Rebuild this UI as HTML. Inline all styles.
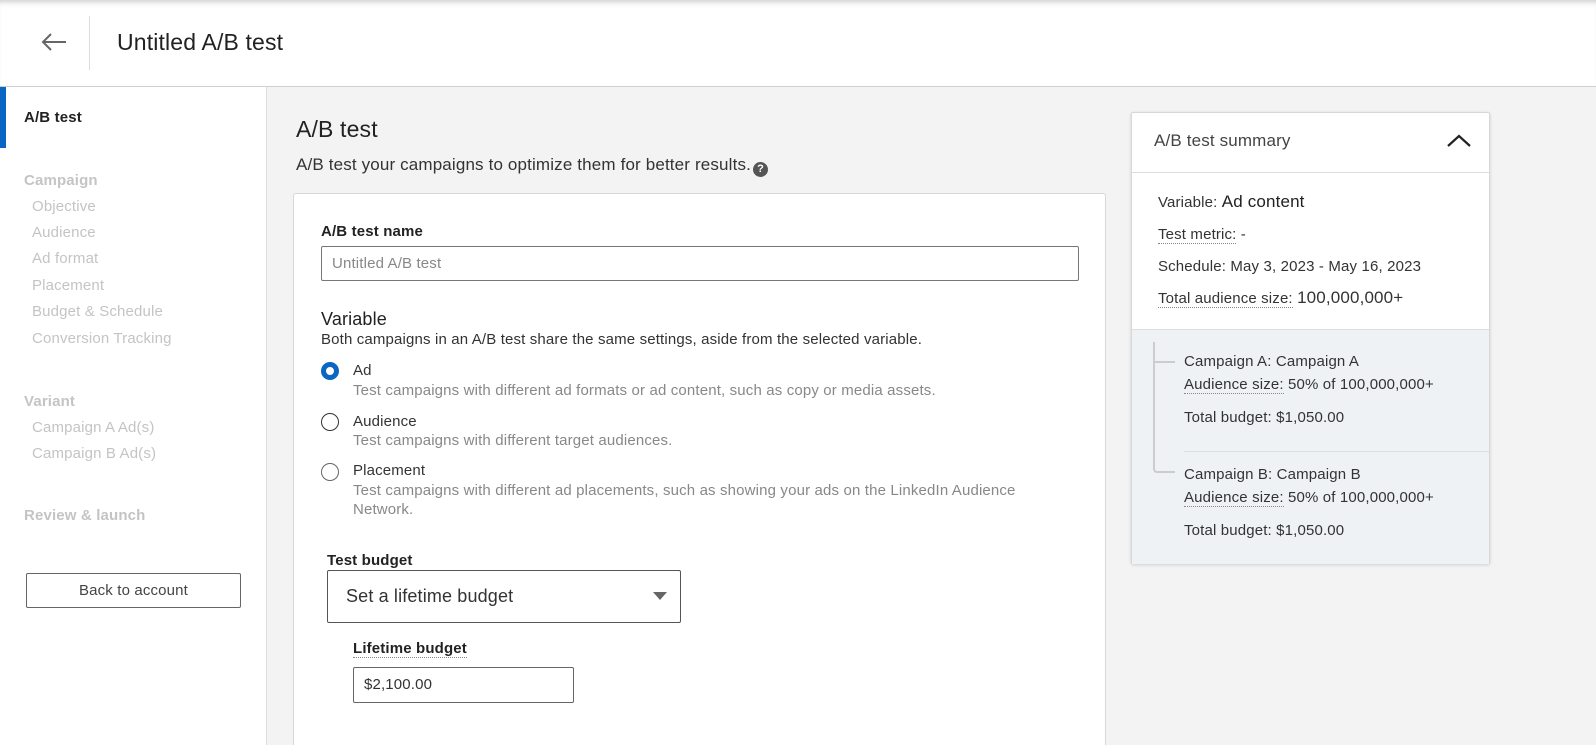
<!DOCTYPE html>
<html style="width:1596px;height:745px;overflow:hidden"><head><style>
*{box-sizing:border-box;margin:0;padding:0}
body{width:1596px;height:745px;overflow:hidden;font-family:"Liberation Sans",sans-serif;background:#f3f3f3;color:#222;position:relative;letter-spacing:.15px}
.abs{position:absolute;white-space:nowrap}
#hdr{position:absolute;left:0;top:0;width:1596px;height:87px;background:#fff;border-bottom:1px solid #d0d0d0;box-shadow:inset 0 6px 6px -4px #ccc}
#side{position:absolute;left:0;top:87px;width:267px;height:658px;background:#fff;border-right:1px solid #ddd}
.nav{position:absolute;left:32px;font-size:15px;color:#c4c4c4}
.navh{position:absolute;left:24px;font-size:15px;font-weight:bold;color:#c4c4c4}
#card{position:absolute;left:293px;top:193px;width:813px;height:552px;background:#fff;border:1px solid #d8d8d8;border-bottom:none;border-radius:3px 3px 0 0}
#sum{position:absolute;left:1131px;top:112px;width:359px;height:452px;background:#fff;border:1px solid #d8d8d8;border-radius:2px;box-shadow:0 1px 3px rgba(0,0,0,.15)}
.radio{position:absolute;width:18px;height:18px;border-radius:50%;border:1.5px solid #333}
.desc{color:#888;font-size:15px}
.dot{border-bottom:1px dotted #888}
</style></head><body>
<div id="hdr">
 <svg class="abs" style="left:40px;top:32px" width="28" height="20" viewBox="0 0 28 20"><path d="M26 10H3M11 2L3 10l8 8" fill="none" stroke="#666" stroke-width="2"/></svg>
 <div class="abs" style="left:89px;top:16px;width:1px;height:54px;background:#ddd"></div>
 <div class="abs" style="left:117px;top:29px;font-size:23px;color:#222">Untitled A/B test</div>
</div>
<div id="side">
 <div class="abs" style="left:0;top:0;width:6px;height:61px;background:#0a66c2"></div>
 <div class="abs" style="left:24px;top:22px;font-size:15px;font-weight:bold;color:#222">A/B test</div>
 <div class="navh" style="top:85px">Campaign</div>
 <div class="nav" style="top:111px">Objective</div>
 <div class="nav" style="top:137px">Audience</div>
 <div class="nav" style="top:163px">Ad format</div>
 <div class="nav" style="top:190px">Placement</div>
 <div class="nav" style="top:216px">Budget &amp; Schedule</div>
 <div class="nav" style="top:243px">Conversion Tracking</div>
 <div class="navh" style="top:306px">Variant</div>
 <div class="nav" style="top:332px">Campaign A Ad(s)</div>
 <div class="nav" style="top:358px">Campaign B Ad(s)</div>
 <div class="navh" style="top:420px">Review &amp; launch</div>
 <div class="abs" style="left:26px;top:486px;width:215px;height:35px;border:1px solid #666;border-radius:2px;text-align:center;line-height:33px;font-size:15px;color:#444">Back to account</div>
</div>
<div class="abs" style="left:296px;top:116px;font-size:23px;color:#222">A/B test</div>
<div class="abs" style="left:296px;top:155px;font-size:17px;color:#333">A/B test your campaigns to optimize them for better results.<span style="display:inline-block;width:15px;height:15px;border-radius:50%;background:#555;color:#fff;font-size:11px;font-weight:bold;text-align:center;line-height:15px;vertical-align:-2px;margin-left:2px;letter-spacing:0">?</span></div>
<div id="card">
 <div class="abs" style="left:27px;top:29px;font-size:15px;font-weight:bold;color:#222">A/B test name</div>
 <div class="abs" style="left:27px;top:52px;width:758px;height:35px;border:1px solid #777;border-radius:2px;padding-left:10px;line-height:33px;font-size:15px;color:#888">Untitled A/B test</div>
 <div class="abs" style="left:27px;top:115px;font-size:18px;color:#222">Variable</div>
 <div class="abs" style="left:27px;top:137px;font-size:15px;color:#333">Both campaigns in an A/B test share the same settings, aside from the selected variable.</div>
 <div class="radio" style="left:27px;top:168px;border:5px solid #0a66c2"></div>
 <div class="abs" style="left:59px;top:168px;font-size:15px;color:#333">Ad</div>
 <div class="abs desc" style="left:59px;top:188px">Test campaigns with different ad formats or ad content, such as copy or media assets.</div>
 <div class="radio" style="left:27px;top:219px"></div>
 <div class="abs" style="left:59px;top:219px;font-size:15px;color:#333">Audience</div>
 <div class="abs desc" style="left:59px;top:238px">Test campaigns with different target audiences.</div>
 <div class="radio" style="left:27px;top:269px;border-color:#666"></div>
 <div class="abs" style="left:59px;top:268px;font-size:15px;color:#333">Placement</div>
 <div class="abs desc" style="left:59px;top:288px">Test campaigns with different ad placements, such as showing your ads on the LinkedIn Audience</div>
 <div class="abs desc" style="left:59px;top:307px">Network.</div>
 <div class="abs" style="left:33px;top:358px;font-size:15px;font-weight:bold;color:#222">Test budget</div>
 <div class="abs" style="left:33px;top:376px;width:354px;height:53px;border:1px solid #555;border-radius:2px;padding-left:18px;line-height:51px;font-size:18px;color:#333">Set a lifetime budget</div>
 <div class="abs" style="left:359px;top:398px;width:0;height:0;border-left:7px solid transparent;border-right:7px solid transparent;border-top:8px solid #666"></div>
 <div class="abs dot" style="left:59px;top:446px;font-size:15px;font-weight:bold;color:#222">Lifetime budget</div>
 <div class="abs" style="left:59px;top:473px;width:221px;height:36px;border:1px solid #666;border-radius:2px;padding-left:10px;line-height:34px;font-size:15px;color:#333">$2,100.00</div>
</div>
<div id="sum">
 <div class="abs" style="left:22px;top:18px;font-size:17px;color:#444">A/B test summary</div>
 <svg class="abs" style="left:314px;top:20px" width="26" height="16" viewBox="0 0 26 16"><path d="M2 13L13 3l11 10" fill="none" stroke="#222" stroke-width="2.2"/></svg>
 <div class="abs" style="left:0;top:59px;width:357px;height:1px;background:#ddd"></div>
 <div class="abs" style="left:26px;top:79px;font-size:15px;color:#333">Variable: <span style="font-size:17px;color:#222">Ad content</span></div>
 <div class="abs" style="left:26px;top:113px;font-size:15px;color:#333"><span class="dot">Test metric:</span> -</div>
 <div class="abs" style="left:26px;top:145px;font-size:15px;color:#333">Schedule: May 3, 2023 - May 16, 2023</div>
 <div class="abs" style="left:26px;top:175px;font-size:15px;color:#333"><span class="dot">Total audience size:</span> <span style="font-size:17px">100,000,000+</span></div>
 <div class="abs" style="left:0;top:216px;width:357px;height:235px;background:#eff2f5;border-top:1px solid #ddd">
  <div class="abs" style="left:21px;top:12px;width:22px;height:131px;border-left:2px solid #ccc;border-bottom:2px solid #ccc;border-bottom-left-radius:4px"></div>
  <div class="abs" style="left:23px;top:31px;width:20px;height:2px;background:#ccc"></div>
  <div class="abs" style="left:52px;top:23px;font-size:15px;color:#333">Campaign A: Campaign A</div>
  <div class="abs" style="left:52px;top:46px;font-size:15px;color:#333"><span class="dot">Audience size:</span> 50% of 100,000,000+</div>
  <div class="abs" style="left:52px;top:79px;font-size:15px;color:#333">Total budget: $1,050.00</div>
  <div class="abs" style="left:52px;top:121px;width:305px;height:1px;background:#ddd"></div>
  <div class="abs" style="left:52px;top:136px;font-size:15px;color:#333">Campaign B: Campaign B</div>
  <div class="abs" style="left:52px;top:159px;font-size:15px;color:#333"><span class="dot">Audience size:</span> 50% of 100,000,000+</div>
  <div class="abs" style="left:52px;top:192px;font-size:15px;color:#333">Total budget: $1,050.00</div>
 </div>
</div>
</body></html>
